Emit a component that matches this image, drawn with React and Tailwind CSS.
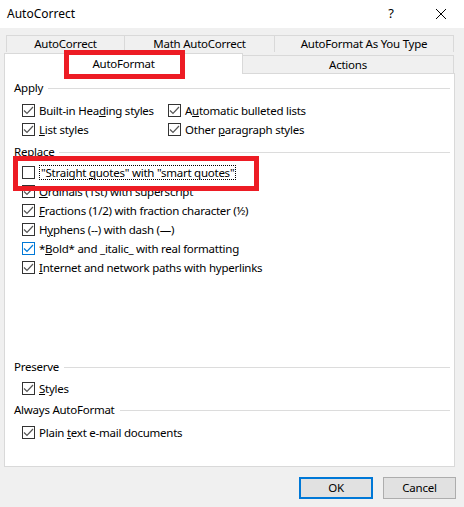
import React from 'react';

function Check({ checked = true, blue = false }) {
  return (
    <span
      className={
        'w-[13px] h-[13px] shrink-0 border bg-white flex items-center justify-center ' +
        (blue ? 'border-[#0078d7]' : 'border-[#333333]')
      }
    >
      {checked && (
        <svg width="11" height="11" viewBox="0 0 11 11">
          <path
            d="M1 5.5 L4 8.5 L10 2"
            fill="none"
            stroke={blue ? '#0078d7' : '#555555'}
            strokeWidth="1.2"
          />
        </svg>
      )}
    </span>
  );
}

function Option({ checked, blue, children, width, focus }) {
  return (
    <div className={'flex items-center h-[19px] gap-[4px] ' + (width || '')}>
      <Check checked={checked} blue={blue} />
      <span className={focus ? 'border border-dotted border-black px-[1px] leading-[13px]' : ''}>
        {children}
      </span>
    </div>
  );
}

function Heading({ children, className = '' }) {
  return (
    <div className={'flex items-center h-[18px] pl-[9px] pr-[4px] gap-[5px] ' + className}>
      <span className="whitespace-nowrap">{children}</span>
      <div className="flex-1 h-px bg-[#dcdcdc]" />
    </div>
  );
}

export default function App() {
  return (
    <div
      className="relative w-[464px] h-[507px] bg-[#f0f0f0] flex flex-col text-[11.5px] tracking-[-0.25px] text-black overflow-hidden"
      style={{ fontFamily: '"Noto Sans", "Open Sans", sans-serif' }}
    >
      {/* title bar */}
      <div className="h-[28px] bg-white flex items-center pl-[7px] text-[12px] tracking-normal">
        <span className="flex-1">AutoCorrect</span>
        <span className="w-[14px] text-center mr-[37px] text-[13px]">?</span>
        <svg width="12" height="12" viewBox="0 0 12 12" className="mr-[17px]">
          <path d="M1 1 L11 11 M11 1 L1 11" stroke="#000" strokeWidth="1" />
        </svg>
      </div>

      {/* tabs */}
      <div className="pt-[7px]">
        <div className="ml-[6px] w-[448px] h-[17px] flex border-t border-[#d9d9d9]">
          <div className="w-[118px] border-l border-[#d9d9d9] flex items-center justify-center">AutoCorrect</div>
          <div className="w-[150px] border-l border-[#d9d9d9] flex items-center justify-center">Math AutoCorrect</div>
          <div className="flex-1 border-l border-r border-[#d9d9d9] flex items-center justify-center">AutoFormat As You Type</div>
        </div>
        <div className="flex items-end h-[21px] ml-[4px]">
          <div className="w-[239px] h-[21px] bg-white border-t border-l border-r border-[#d9d9d9] flex items-center justify-center relative z-10 -mb-px pb-[1px]">
            AutoFormat
          </div>
          <div className="w-[211px] h-[18px] border-t border-r border-[#d9d9d9] flex items-center justify-center">Actions</div>
        </div>
      </div>

      {/* panel */}
      <div className="ml-[4px] w-[451px] h-[394px] bg-white border border-[#d9d9d9] pt-[5px]">
        <Heading>Apply</Heading>
        <div className="pl-[17px] mt-[4px]">
          <div className="flex">
            <Option width="w-[146px]">Built-in Hea<u>d</u>ing styles</Option>
            <Option>A<u>u</u>tomatic bulleted lists</Option>
          </div>
          <div className="flex">
            <Option width="w-[146px]"><u>L</u>ist styles</Option>
            <Option>Other <u>p</u>aragraph styles</Option>
          </div>
        </div>

        <Heading className="mt-[4px]">Replace</Heading>
        <div className="pl-[17px] mt-[2px]">
          <Option checked={false} focus>"Straight <u>q</u>uotes" with "smart quotes"</Option>
          <Option><u>O</u>rdinals (1st) with superscript</Option>
          <Option><u>F</u>ractions (1/2) with fraction character (½)</Option>
          <Option>H<u>y</u>phens (--) with dash (—)</Option>
          <Option blue>*<u>B</u>old* and _italic_ with real formatting</Option>
          <Option><u>I</u>nternet and network paths with hyperlinks</Option>
        </div>

        <Heading className="mt-[81px]">Preserve</Heading>
        <div className="pl-[17px] mt-[3px]">
          <Option><u>S</u>tyles</Option>
        </div>

        <Heading className="mt-[3px]">Always AutoFormat</Heading>
        <div className="pl-[17px] mt-[4px]">
          <Option>Plain <u>t</u>ext e-mail documents</Option>
        </div>
      </div>

      {/* buttons */}
      <div className="flex justify-end gap-[10px] pr-[8px] mt-[10px]">
        <button className="w-[74px] h-[22px] bg-[#e1e1e1] border-2 border-[#0078d7] flex items-center justify-center">OK</button>
        <button className="w-[73px] h-[22px] bg-[#e1e1e1] border border-[#adadad] flex items-center justify-center">Cancel</button>
      </div>

      {/* red annotation boxes */}
      <div className="absolute left-[64px] top-[50px] w-[121px] h-[29px] border-[5px] border-[#ed1c24] z-20" />
      <div className="absolute left-[13px] top-[156px] w-[246px] h-[35px] border-[5px] border-[#ed1c24] z-20" />
    </div>
  );
}
